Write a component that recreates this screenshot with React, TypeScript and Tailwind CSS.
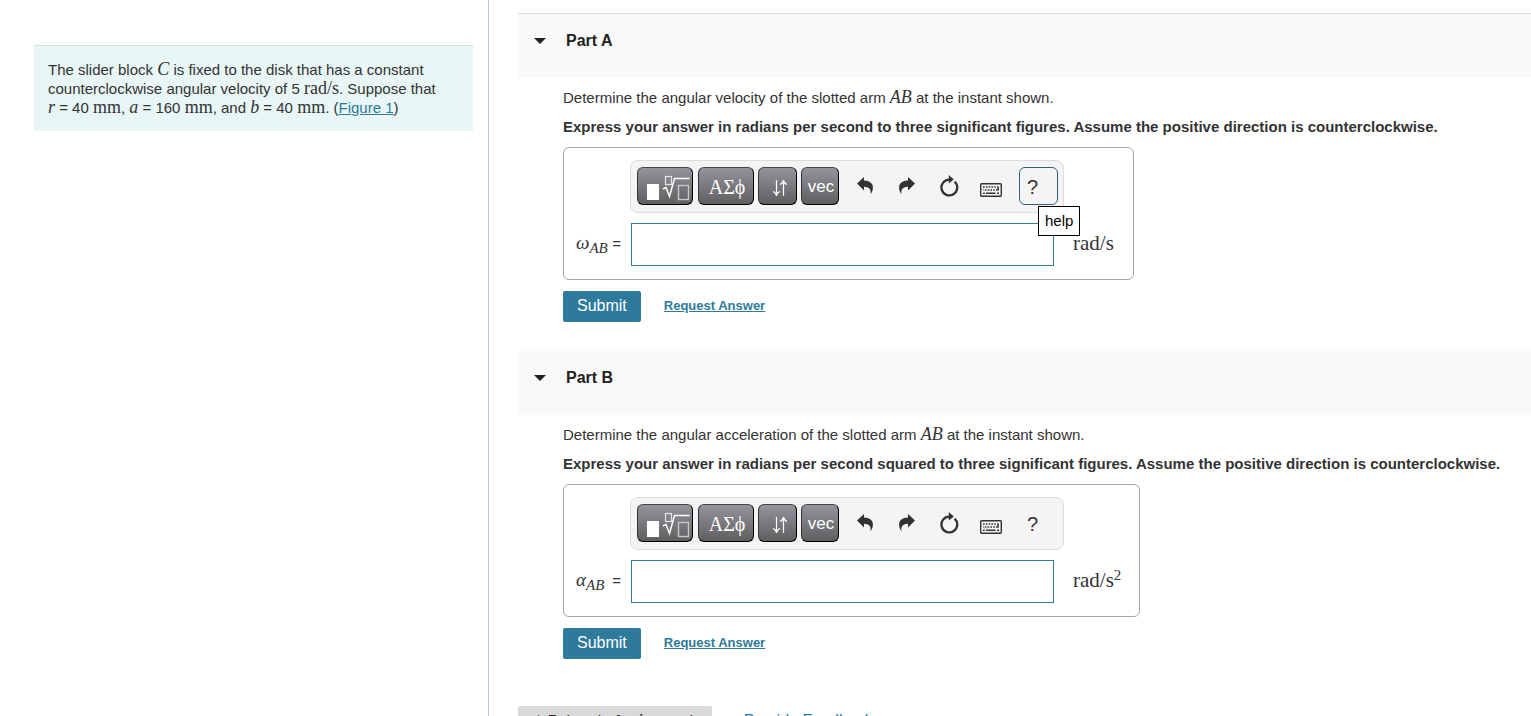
import React, { useState } from "react";

interface PartProps {
  id: string;
  title: string;
  quantity: string;
  instruction: string;
  symbol: string;
  unit: React.ReactNode;
  first?: boolean;
  showHelp?: boolean;
}

const MATH_FONT = "font-['Liberation_Serif',serif]";

const MathVar = ({ children }: { children: React.ReactNode }) => (
  <i className="font-['Liberation_Serif',serif] text-[18px] leading-0">{children}</i>
);

const MathUnit = ({ children }: { children: React.ReactNode }) => (
  <span className="font-['Liberation_Serif',serif] text-[18px] leading-0">{children}</span>
);

const TemplateIcon = () => (
  <svg width="54" height="36" viewBox="0 0 54 36" fill="none" aria-hidden="true">
    <rect x="9" y="16" width="12" height="16" fill="#fff" />
    <rect x="27.5" y="8.5" width="6" height="8" stroke="#e4e4e4" strokeWidth="1.2" />
    <path d="M25 21l3-1.500 3.500 9L36.500 10.500h15" stroke="#fff" strokeWidth="1.5" />
    <rect x="40.5" y="17.5" width="10" height="14" stroke="#c8c8c8" strokeWidth="1.4" />
  </svg>
);

const ArrowsIcon = () => (
  <svg width="16" height="18" viewBox="0 0 16 18" fill="none" stroke="#fff" strokeWidth="1.2" aria-hidden="true">
    <path d="M4.5 1v15.5M1 12.5q3 1 3.5 4.3Q5 13.500 8 12.5" />
    <path d="M11.500 17V1.500M8 5.500q3-1 3.500-4.300Q12 4.500 15 5.500" />
  </svg>
);

const UndoIcon = () => (
  <svg width="16" height="18" viewBox="0 0 16 18" fill="#333" aria-hidden="true">
    <path d="M0 6.600L7 0v3.600c5.700.2 8.900 2.700 8.900 7 0 2.600-.9 4.900-2.500 6.700.9-4.900-1-7.400-6.400-7.500v3.700z" />
  </svg>
);

const RedoIcon = () => (
  <svg width="16" height="18" viewBox="0 0 16 18" fill="#333" aria-hidden="true">
    <path d="M16 6.600L9 0v3.600C3.300 3.800.1 6.300.1 10.600c0 2.600.9 4.900 2.500 6.700-.9-4.900 1-7.400 6.400-7.500v3.700z" />
  </svg>
);

const ResetIcon = () => (
  <svg width="20" height="22" viewBox="0 0 20 22" fill="none" aria-hidden="true">
    <path d="M15.600 6.600A7.900 7.900 0 1 1 10.500 4.600" stroke="#333" strokeWidth="2.300" />
    <path d="M9.800 0l5 4.500-5 4z" fill="#333" />
  </svg>
);

const KeyboardIcon = () => (
  <svg width="22" height="14" viewBox="0 0 22 14" fill="none" stroke="#333" aria-hidden="true">
    <rect x=".7" y=".7" width="20.600" height="12.600" rx="1" strokeWidth="1.400" />
    <path d="M3 4h13" strokeWidth="1.600" strokeDasharray="1.600 1.200" />
    <path d="M3 7h14" strokeWidth="1.600" strokeDasharray="1.600 1.200" strokeDashoffset="1" />
    <path d="M18 3.200V7.800" strokeWidth="1.600" />
    <path d="M3 10.300h1.800M6 10.300h9.500M17 10.300h2" strokeWidth="1.600" />
  </svg>
);

const PaletteButton = ({ label, className, children }: { label: string; className: string; children: React.ReactNode }) => (
  <button
    type="button"
    aria-label={label}
    className={`flex h-[38px] items-center justify-center rounded-md border border-black border-t-[#444] border-l-[#333] bg-linear-to-b from-[#96949c] to-[#5f5f61] text-white ${className}`}
  >
    {children}
  </button>
);

const ToolButton = ({ label, children }: { label: string; children: React.ReactNode }) => (
  <button type="button" aria-label={label} className="flex h-[38px] w-[39px] items-center justify-center pr-3">
    {children}
  </button>
);

const Toolbar = ({ showHelp }: { showHelp?: boolean }) => (
  <div className="flex items-start rounded-lg border border-[#dcdcdc] bg-[#f4f4f4] pt-[6px] pr-[5px] pb-[7px] pl-[6px]">
    <div className="flex gap-1">
      <PaletteButton label="Templates" className="w-[56px]">
        <TemplateIcon />
      </PaletteButton>
      <PaletteButton label="Symbols" className="ml-px w-[56px] pt-[2px] pl-[2px] font-['Liberation_Serif',serif] text-[20px]">
        ΑΣϕ
      </PaletteButton>
      <PaletteButton label="Subscript and superscript" className="w-[39px] pt-1 pl-1">
        <ArrowsIcon />
      </PaletteButton>
      <PaletteButton label="Vectors" className="w-[38px] pt-[2px] pl-[2px] text-[17px]">
        vec
      </PaletteButton>
    </div>
    <div className="ml-3 flex gap-[3px]">
      <ToolButton label="Undo">
        <UndoIcon />
      </ToolButton>
      <ToolButton label="Redo">
        <RedoIcon />
      </ToolButton>
      <ToolButton label="Reset">
        <ResetIcon />
      </ToolButton>
      <ToolButton label="Keyboard shortcuts">
        <span className="pt-2">
          <KeyboardIcon />
        </span>
      </ToolButton>
      <div className="relative">
        <button
          type="button"
          className={`flex h-[38px] w-[39px] items-center justify-center rounded-md border pt-[2px] pr-3 text-[20px] text-[#333] ${
            showHelp ? "border-[#2d6475]" : "border-transparent"
          }`}
        >
          ?
        </button>
        {showHelp && (
          <div
            role="tooltip"
            className="absolute top-[39px] left-[19px] z-10 border border-black bg-white px-[6px] text-[15px] leading-[28px] text-black"
          >
            help
          </div>
        )}
      </div>
    </div>
  </div>
);

const Part: React.FC<PartProps> = ({ id, title, quantity, instruction, symbol, unit, first, showHelp }) => {
  const [open, setOpen] = useState(true);
  const [answer, setAnswer] = useState("");

  return (
    <section>
      <h2 className={`h-16 bg-[#f9f9f9] ${first ? "box-content border-t border-[#ddd]" : ""}`}>
        <button
          type="button"
          aria-expanded={open}
          onClick={() => setOpen(!open)}
          className="flex items-center gap-5 pt-[15px] pl-4 text-base font-bold text-[#222]"
        >
          <svg width="12" height="6" viewBox="0 0 12 6" fill="#222" aria-hidden="true">
            <path d="M0 0h12L6 6z" />
          </svg>
          {title}
        </button>
      </h2>
      {open && (
        <div className="pt-[10px] pb-[29px] pl-[45px]">
          <p className="mb-[9px] leading-5">
            Determine the {quantity} of the slotted arm <MathVar>AB</MathVar> at the instant shown.
          </p>
          <p className="mb-[10px] leading-5 font-bold">{instruction}</p>
          <div className="mb-[11px] w-fit rounded-md border border-[#a5a5a5] pt-3 pr-[18px] pb-[13px] pl-3">
            <div className="ml-[54px] w-fit">
              <Toolbar showHelp={showHelp} />
            </div>
            <div className="mt-[10px] flex items-center">
              <label
                htmlFor={id}
                className="mr-[10px] flex w-[45px] items-baseline justify-between pb-[2px] leading-5 whitespace-nowrap"
              >
                <span>
                  <i className={`${MATH_FONT} text-[19px]`}>{symbol}</i>
                  <i className={`${MATH_FONT} relative top-1 text-[15px]`}>AB</i>
                </span>
                <span>=</span>
              </label>
              <input
                id={id}
                type="text"
                value={answer}
                onChange={(e) => setAnswer(e.target.value)}
                className="h-[43px] w-[423px] border border-[#2e7a9b] bg-white px-2 outline-none"
              />
              <span className={`${MATH_FONT} ml-[19px] min-w-[42px] pb-[2px] text-[21px] leading-none`}>{unit}</span>
            </div>
          </div>
          <div className="flex items-center gap-[23px]">
            <button type="button" className="h-[31px] rounded-xs bg-[#2e7a9b] px-[14px] pb-[2px] text-base leading-5 text-white">
              Submit
            </button>
            <a href="#" className="pb-[2px] text-[13px] font-bold text-[#2e7a9b] underline">
              Request Answer
            </a>
          </div>
        </div>
      )}
    </section>
  );
};

export default function App() {
  return (
    <div className="flex h-screen overflow-hidden bg-white font-['Liberation_Sans',Arial,sans-serif] text-[15px] text-[#333]">
      <aside className="w-[489px] shrink-0 border-r border-[#b9c9d9] pt-[45px] pr-[15px] pl-[34px]">
        <p className="border-t border-[#d8dfdf] bg-[#e8f6f6] p-[14px] leading-[19px]">
          The slider block <MathVar>C</MathVar> is fixed to the disk that has a constant counterclockwise angular
          velocity of 5 <MathUnit>rad/s</MathUnit>. Suppose that{" "}
          <span className="whitespace-nowrap">
            <MathVar>r</MathVar> = 40 <MathUnit>mm</MathUnit>,
          </span>{" "}
          <MathVar>a</MathVar> = 160 <MathUnit>mm</MathUnit>, and <MathVar>b</MathVar> = 40 <MathUnit>mm</MathUnit>. (
          <a href="#" className="text-[#2e7a9b] underline">
            Figure 1
          </a>
          )
        </p>
      </aside>
      <main className="min-w-0 flex-1 overflow-hidden pt-[13px] pl-[29px]">
        <Part
          id="omega"
          title="Part A"
          quantity="angular velocity"
          instruction="Express your answer in radians per second to three significant figures. Assume the positive direction is counterclockwise."
          symbol="ω"
          unit="rad/s"
          first
          showHelp
        />
        <Part
          id="alpha"
          title="Part B"
          quantity="angular acceleration"
          instruction="Express your answer in radians per second squared to three significant figures. Assume the positive direction is counterclockwise."
          symbol="α"
          unit={
            <>
              rad/s<sup className="text-[15px]">2</sup>
            </>
          }
        />
        <div className="mt-[18px] flex items-start gap-8">
          <button
            type="button"
            className="flex items-center gap-1 rounded-xs bg-[#d9d9d9] py-1 pr-[18px] pl-[15px] text-sm leading-5 font-bold text-[#222]"
          >
            <svg width="11" height="12" viewBox="0 0 11 12" fill="none" stroke="#333" strokeWidth="2" aria-hidden="true">
              <path d="M1.500 7l4-4.500 4 4.500M5.500 3v9" />
            </svg>
            Return to Assignment
          </button>
          <a href="#" className="py-[5px] text-base leading-5 text-[#1c7ab0]">
            Provide Feedback
          </a>
        </div>
      </main>
    </div>
  );
}
